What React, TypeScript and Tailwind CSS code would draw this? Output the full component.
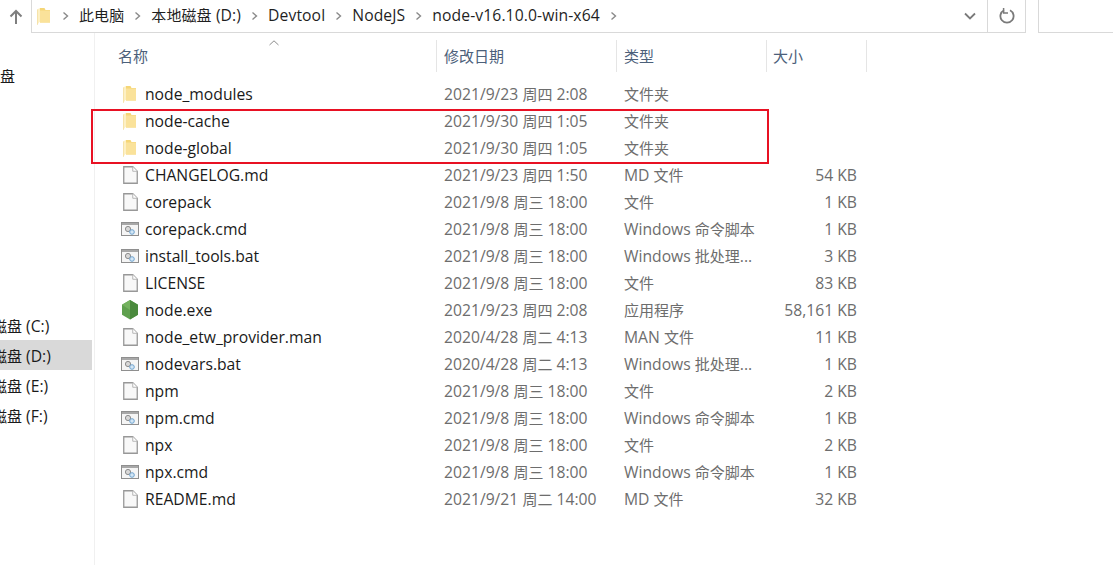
const fontStack = { fontFamily: '"Open Sans", "Noto Sans CJK SC", sans-serif' }

type Kind = "folder" | "file" | "cmd" | "node"

const rows: { name: string; date: string; type: string; size?: string; kind: Kind }[] = [
  { name: "node_modules", date: "2021/9/23 周四 2:08", type: "文件夹", kind: "folder" },
  { name: "node-cache", date: "2021/9/30 周四 1:05", type: "文件夹", kind: "folder" },
  { name: "node-global", date: "2021/9/30 周四 1:05", type: "文件夹", kind: "folder" },
  { name: "CHANGELOG.md", date: "2021/9/23 周四 1:50", type: "MD 文件", size: "54 KB", kind: "file" },
  { name: "corepack", date: "2021/9/8 周三 18:00", type: "文件", size: "1 KB", kind: "file" },
  { name: "corepack.cmd", date: "2021/9/8 周三 18:00", type: "Windows 命令脚本", size: "1 KB", kind: "cmd" },
  { name: "install_tools.bat", date: "2021/9/8 周三 18:00", type: "Windows 批处理...", size: "3 KB", kind: "cmd" },
  { name: "LICENSE", date: "2021/9/8 周三 18:00", type: "文件", size: "83 KB", kind: "file" },
  { name: "node.exe", date: "2021/9/23 周四 2:08", type: "应用程序", size: "58,161 KB", kind: "node" },
  { name: "node_etw_provider.man", date: "2020/4/28 周二 4:13", type: "MAN 文件", size: "11 KB", kind: "file" },
  { name: "nodevars.bat", date: "2020/4/28 周二 4:13", type: "Windows 批处理...", size: "1 KB", kind: "cmd" },
  { name: "npm", date: "2021/9/8 周三 18:00", type: "文件", size: "2 KB", kind: "file" },
  { name: "npm.cmd", date: "2021/9/8 周三 18:00", type: "Windows 命令脚本", size: "1 KB", kind: "cmd" },
  { name: "npx", date: "2021/9/8 周三 18:00", type: "文件", size: "2 KB", kind: "file" },
  { name: "npx.cmd", date: "2021/9/8 周三 18:00", type: "Windows 命令脚本", size: "1 KB", kind: "cmd" },
  { name: "README.md", date: "2021/9/21 周二 14:00", type: "MD 文件", size: "32 KB", kind: "file" },
]

const crumbs = ["此电脑", "本地磁盘 (D:)", "Devtool", "NodeJS", "node-v16.10.0-win-x64"]

const drives = [
  { label: "本地磁盘 (C:)" },
  { label: "本地磁盘 (D:)", active: true },
  { label: "本地磁盘 (E:)" },
  { label: "本地磁盘 (F:)" },
]

// latin runs sit a bit larger than the CJK ones, closer to the original UI font
function Mixed({ text }: { text: string }) {
  return (
    <>
      {text.split(/([\u4e00-\u9fff]+)/).map((part, i) =>
        i % 2 === 1 ? (
          <span key={i}>{part}</span>
        ) : (
          <span key={i} className="text-[15.7px]">
            {part}
          </span>
        )
      )}
    </>
  )
}

function FolderIcon() {
  return (
    <svg width="13" height="17" viewBox="0 0 13 17" className="shrink-0">
      <path d="M3 0h4.5l1 2H13v12.5H3z" fill="#f5d677" />
      <path d="M3 2.5h10v12H3z" fill="#fae29a" />
      <path d="M0 1.5L3 0v13.5L0 17z" fill="#fdf0c4" />
      <path d="M0 1.5V17" stroke="#ecd085" strokeWidth="0.8" />
    </svg>
  )
}

function FileIcon() {
  return (
    <svg width="15" height="18" viewBox="0 0 15 18" className="shrink-0">
      <path d="M.75 .75h9l4.5 4.5v12h-13.5z" fill="#f8f8f8" stroke="#989898" strokeWidth="1.3" />
      <path d="M9.75 .75v4.5h4.5" fill="#fff" stroke="#b5b5b5" />
    </svg>
  )
}

function CmdIcon() {
  return (
    <svg width="18" height="14" viewBox="0 0 18 14" className="shrink-0">
      <rect x=".5" y=".5" width="17" height="13" fill="#f5f5f5" stroke="#8f8f8f" />
      <rect x="1" y="1" width="16" height="2" fill="#a8a8a8" />
      <circle cx="7" cy="7" r="2.6" fill="#d8d8d8" stroke="#8c8c8c" />
      <circle cx="11" cy="10" r="2.3" fill="#d3e6f5" stroke="#6fa3cf" />
    </svg>
  )
}

function NodeIcon() {
  return (
    <svg width="18" height="20" viewBox="0 0 18 20" className="shrink-0">
      <path d="M9 0l8 4.7v10L9 19.5 1 14.7v-10z" fill="#5fa04e" />
      <path d="M9 0l8 4.7v10L9 19.5z" fill="#4b8a3d" />
      <path d="M1 4.7L9 0v10z" fill="#74b25f" />
    </svg>
  )
}

function RowIcon({ kind }: { kind: Kind }) {
  if (kind === "folder") return <FolderIcon />
  if (kind === "file") return <FileIcon />
  if (kind === "cmd") return <CmdIcon />
  return <NodeIcon />
}

function Chevron() {
  return (
    <svg width="27" height="12" viewBox="0 0 27 12" className="shrink-0">
      <path d="M11.5 2.5l4 3.5-4 3.5" fill="none" stroke="#8a8a8a" strokeWidth="1.4" />
    </svg>
  )
}

export default function App() {
  return (
    <div className="flex h-[565px] w-[1113px] flex-col overflow-hidden bg-white text-[15px]" style={fontStack}>
      <div className="flex h-[33px] shrink-0">
        <div className="flex w-[31px] items-center justify-center">
          <svg width="14" height="16" viewBox="0 0 14 16">
            <path d="M7 15V2M1.5 7.5L7 2l5.5 5.5" fill="none" stroke="#7f7f7f" strokeWidth="2" />
          </svg>
        </div>
        <div className="flex w-[995px] items-center border-r border-b border-l border-[#d9d9d9]">
          <div className="ml-[5px] mr-[2px]">
            <FolderIcon />
          </div>
          <Chevron />
          {crumbs.map((c) => (
            <div key={c} className="flex items-center whitespace-nowrap tracking-[0.1px] text-[#1f1f1f]">
              <span>
                <Mixed text={c} />
              </span>
              <Chevron />
            </div>
          ))}
          <div className="flex flex-1 justify-end pr-[11px]">
            <svg width="12" height="8" viewBox="0 0 12 8">
              <path d="M1 1.5l5 5 5-5" fill="none" stroke="#7a7a7a" strokeWidth="1.8" />
            </svg>
          </div>
          <div className="flex h-full w-[38px] items-center justify-center border-l border-[#d9d9d9]">
            <svg width="16" height="16" viewBox="0 0 16 16">
              <path d="M5 2.2a6.6 6.6 0 1 0 6 0" fill="none" stroke="#7a7a7a" strokeWidth="1.8" />
              <path d="M4.6 0v5H9" fill="none" stroke="#7a7a7a" strokeWidth="1.5" />
            </svg>
          </div>
        </div>
        <div className="ml-[12px] flex-1 border-b border-l border-[#d9d9d9]" />
      </div>

      <div className="flex flex-1">
        <div className="w-[95px] shrink-0 border-r border-[#f0f0f0] text-[#1a1a1a]">
          <div className="mt-[27px] mb-[220px] flex h-[30px] w-[92px] items-center overflow-hidden whitespace-nowrap pt-[2px]">
            <span className="-ml-[15px]">网盘</span>
          </div>
          {drives.map((d) => (
            <div
              key={d.label}
              className={`flex h-[30px] w-[92px] items-center overflow-hidden whitespace-nowrap pt-[3px] ${d.active ? "bg-[#d9d9d9]" : ""}`}
            >
              <span className="-ml-[38px]">
                <Mixed text={d.label} />
              </span>
            </div>
          ))}
        </div>

        <div className="relative flex-1">
          <div className="relative mt-[7px] mb-[9px] grid h-[32px] grid-cols-[342px_180px_150px_100px] text-[#4c607a]">
            <div className="flex items-center border-r border-[#e5e5e5] pl-[23px]">名称</div>
            <div className="flex items-center border-r border-[#e5e5e5] pl-[7px]">修改日期</div>
            <div className="flex items-center border-r border-[#e5e5e5] pl-[7px]">类型</div>
            <div className="flex items-center border-r border-[#e5e5e5] pl-[6px]">大小</div>
            <svg width="10" height="6" viewBox="0 0 10 6" className="absolute top-0 left-[174px]">
              <path d="M.5 5L5 .8 9.5 5" fill="none" stroke="#8c8c8c" />
            </svg>
          </div>

          <div className="relative">
            {rows.map((r) => (
              <div key={r.name} className="grid h-[27px] grid-cols-[342px_180px_150px_100px] items-center whitespace-nowrap">
                <div className="flex items-center pl-[26px] text-[#1a1a1a]">
                  <div className="flex w-[24px] items-center">
                    <div className={r.kind === "folder" || r.kind === "file" ? "ml-[2px]" : ""}>
                      <RowIcon kind={r.kind} />
                    </div>
                  </div>
                  <span>
                    <Mixed text={r.name} />
                  </span>
                </div>
                <div className="pl-[7px] text-[#6d6d6d]">
                  <Mixed text={r.date} />
                </div>
                <div className="pl-[7px] text-[#6d6d6d]">
                  <Mixed text={r.type} />
                </div>
                <div className="pr-[10px] text-right text-[#6d6d6d]">{r.size ? <Mixed text={r.size} /> : null}</div>
              </div>
            ))}
            <div className="absolute top-[28px] left-[-4px] h-[55px] w-[678px] border-2 border-[#e81123]" />
          </div>
        </div>
      </div>
    </div>
  )
}
